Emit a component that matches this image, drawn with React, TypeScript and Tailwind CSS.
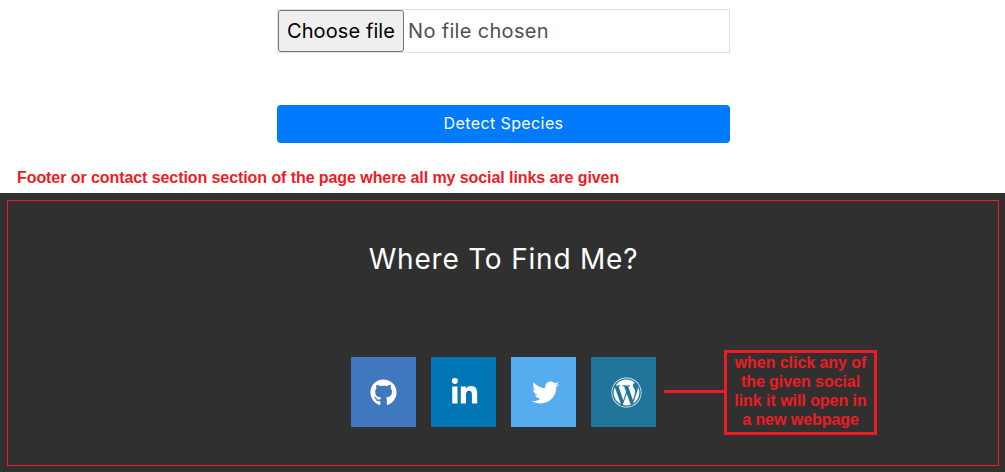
import { FaGithub, FaLinkedinIn, FaTwitter, FaWordpress } from 'react-icons/fa';

const socials = [
  { name: 'GitHub', bg: 'bg-[#4078c0]', icon: <FaGithub className="h-[27px] w-[27px]" /> },
  { name: 'LinkedIn', bg: 'bg-[#0077b5] pl-[1px]', icon: <FaLinkedinIn className="h-[29px] w-[29px]" /> },
  { name: 'Twitter', bg: 'bg-[#55acee] pl-[4px]', icon: <FaTwitter className="h-[27px] w-[27px]" /> },
  { name: 'WordPress', bg: 'bg-[#21759b] pl-[6px]', icon: <FaWordpress className="h-[31px] w-[31px]" /> },
];

export default function App() {
  return (
    <div className="h-[472px] w-[1005px] overflow-hidden bg-white font-['Inter',sans-serif]">
      <div className="ml-[277px] flex w-[453px] flex-col pt-[9px]">
        <label className="flex h-[44px] cursor-pointer items-center border border-[#dee2e6] text-[20px]">
          <input type="file" className="sr-only" />
          <span className="flex h-[42px] w-[126px] items-center justify-center rounded-[3px] border border-[#767676] bg-[#efefef] tracking-[0.1px] text-black">
            Choose file
          </span>
          <span className="ml-[4px] tracking-[0.33px] text-[#495057]">No file chosen</span>
        </label>
        <button className="mt-[52px] h-[38px] rounded-[4px] bg-[#007bff] pb-[2px] text-[16px] tracking-[0.4px] text-white">
          Detect Species
        </button>
      </div>

      <p className="mt-[25px] h-[25px] pl-[17px] font-['Liberation_Sans',sans-serif] text-[16px] leading-[19px] font-bold tracking-[-0.075px] text-[#ed1c24]">
        Footer or contact section section of the page where all my social links are given
      </p>

      <footer className="relative h-[279px] bg-[#303030] pt-[7px] pr-[6px] pl-[7px]">
        <div className="h-[266px] border border-[#ed1c24]">
          <h2 className="pt-[41px] pl-[1px] text-center text-[28px] leading-[34px] font-normal tracking-[0.8px] text-white">
            Where To Find Me?
          </h2>
          <div className="mt-[81px] flex justify-center gap-[15px] pl-[1px]">
            {socials.map((s) => (
              <a
                key={s.name}
                href="#"
                aria-label={s.name}
                className={`flex h-[70px] w-[65px] items-center justify-center text-white ${s.bg}`}
              >
                {s.icon}
              </a>
            ))}
          </div>
        </div>

        {/* annotation over the footer */}
        <div className="absolute top-[197px] left-[664px] h-[3px] w-[60px] bg-[#ed1c24]" />
        <div className="absolute top-[157px] left-[724px] flex h-[85px] w-[153px] items-center justify-center border-[3px] border-[#ed1c24] pb-[4px] text-center font-['Liberation_Sans',sans-serif] text-[16px] leading-[19px] font-bold tracking-[-0.05px] text-[#ed1c24]">
          <span>
            when click any of
            <br />
            the given social
            <br />
            link it will open in
            <br />a new webpage
          </span>
        </div>
      </footer>
    </div>
  );
}
